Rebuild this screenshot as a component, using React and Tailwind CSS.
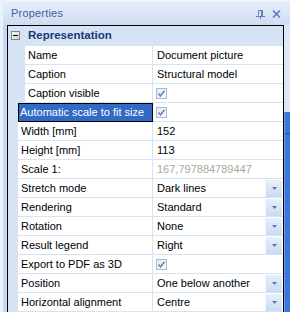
import React from 'react';

const FONT = { fontFamily: '"Liberation Sans", Arial, sans-serif' };

// property rows below the "Representation" category
const rows = [
  { label: 'Name', value: 'Document picture', child: true },
  { label: 'Caption', value: 'Structural model', child: true },
  { label: 'Caption visible', check: true, child: true },
  { label: 'Automatic scale to fit size', check: true, selected: true },
  { label: 'Width [mm]', value: '152' },
  { label: 'Height [mm]', value: '113' },
  { label: 'Scale 1:', value: '167,797884789447', disabled: true },
  { label: 'Stretch mode', value: 'Dark lines', drop: true },
  { label: 'Rendering', value: 'Standard', drop: true },
  { label: 'Rotation', value: 'None', drop: true },
  { label: 'Result legend', value: 'Right', drop: true },
  { label: 'Export to PDF as 3D', check: true },
  { label: 'Position', value: 'One below another', drop: true },
  { label: 'Horizontal alignment', value: 'Centre', drop: true },
];

function CheckBox() {
  return (
    <div className="w-[11px] h-[11px] border border-[#a7bad6] bg-gradient-to-br from-[#e4e9f0] to-[#fbfcfd] flex items-center justify-center">
      <svg width="9" height="9" viewBox="0 0 9 9">
        <path d="M1.5 4.5 L3.5 6.8 L7.5 1.8" fill="none" stroke="#6f8bb8" strokeWidth="1.7" />
      </svg>
    </div>
  );
}

function DropButton() {
  return (
    <div className="w-[17px] mt-px mr-px shrink-0 bg-gradient-to-b from-[#e8f0fa] to-[#c9dbf1] border-l border-[#f0f5fc] flex items-center justify-center">
      <svg width="5" height="3" viewBox="0 0 5 3">
        <path d="M0 0h5L2.5 3z" fill="#5a78ad" />
      </svg>
    </div>
  );
}

function Row({ row }) {
  const gutter = row.child ? 'w-[17px]' : 'w-[10px]';
  const labelW = row.child ? 'w-[128px]' : 'w-[135px]';
  return (
    <div className="flex h-[19px] shrink-0">
      <div className={`${gutter} shrink-0 bg-[#d5e3f4]`} />
      {row.selected ? (
        <div className={`${labelW} shrink-0 h-[19px] border border-black bg-[#316ac5] text-white pl-px flex items-center whitespace-nowrap overflow-hidden`}>
          {row.label}
        </div>
      ) : (
        <div className={`${labelW} shrink-0 border-b border-r border-[#d5e3f4] pl-[3px] flex items-center whitespace-nowrap overflow-hidden`}>
          {row.label}
        </div>
      )}
      <div className="flex-1 flex border-b border-[#d5e3f4] min-w-0">
        <div className="flex-1 flex items-center pl-[4px] whitespace-nowrap overflow-hidden">
          {row.check ? (
            <div className="-ml-px"><CheckBox /></div>
          ) : (
            <span className={row.disabled ? 'text-[#aca899]' : ''}>{row.value}</span>
          )}
        </div>
        {row.drop && <DropButton />}
      </div>
    </div>
  );
}

export default function App() {
  return (
    <div className="w-[290px] h-[312px] overflow-hidden flex flex-col border-l-[3px] border-[#eaf1fa] bg-[#c8d9f0] text-[11px] text-black" style={FONT}>
      {/* title bar */}
      <div className="h-[25px] shrink-0 flex items-center justify-between pl-[8px] pr-[9px] bg-gradient-to-b from-[#e6eef9] to-[#cfddf1] border-t border-[#f2f6fc]">
        <span className="text-[11px] tracking-[0.2px] text-[#42639a]">Properties</span>
        <div className="flex items-center gap-[7px] pt-[2px]">
          <svg width="9" height="9" viewBox="0 0 9 9">
            <path d="M2.5 0.5v5M2.5 0.5h3" fill="none" stroke="#5a7ec0" />
            <rect x="5" y="0" width="2" height="6" fill="#5a7ec0" />
            <path d="M0 6.5h9M4.5 7v2" fill="none" stroke="#5a7ec0" />
          </svg>
          <svg width="9" height="8" viewBox="0 0 9 8">
            <path d="M1 0.5 L8 7.5 M8 0.5 L1 7.5" fill="none" stroke="#5a7ec0" strokeWidth="1.6" />
          </svg>
        </div>
      </div>

      {/* body */}
      <div className="flex flex-1 min-h-0">
        <div className="w-[4px] shrink-0 bg-[#c6d8f0]" />

        <div className="w-[277px] shrink-0 flex flex-col border-t border-l border-r border-black bg-white">
          {/* category */}
          <div className="h-[20px] shrink-0 flex items-center bg-[#d5e3f4] border-b border-[#d5e3f4]">
            <div className="ml-[3px] w-[9px] h-[9px] border border-[#868686] bg-gradient-to-br from-white to-[#cfcfcf] flex items-center justify-center">
              <div className="w-[5px] h-px bg-black" />
            </div>
            <span className="ml-[8px] text-[11.5px] font-bold text-[#17377a]">Representation</span>
          </div>
          {rows.map((r) => (
            <Row key={r.label} row={r} />
          ))}
        </div>

        <div className="w-[6px] shrink-0 flex flex-col">
          <div className="h-[87px] shrink-0 bg-[#dde8f6]" />
          <div className="flex-1 flex flex-col bg-[#3a76dc] border-l border-[#6d9bea]">
            <div className="h-[21px] shrink-0" />
            <div className="h-px bg-[#1d4fb0]" />
          </div>
        </div>
      </div>
    </div>
  );
}
